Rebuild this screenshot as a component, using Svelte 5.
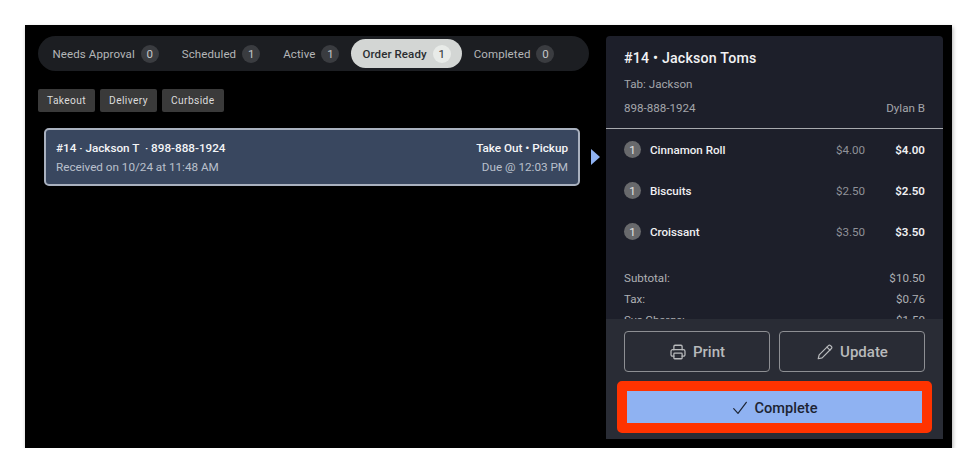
<script lang="ts">
  const tabs = [
    { label: 'Needs Approval', count: 0 },
    { label: 'Scheduled', count: 1 },
    { label: 'Active', count: 1 },
    { label: 'Order Ready', count: 1, active: true },
    { label: 'Completed', count: 0 },
  ];
  const filters = ['Takeout', 'Delivery', 'Curbside'];
  const items = [
    { name: 'Cinnamon Roll', price: '$4.00' },
    { name: 'Biscuits', price: '$2.50' },
    { name: 'Croissant', price: '$3.50' },
  ];
  const totals = [
    { label: 'Subtotal:', value: '$10.50' },
    { label: 'Tax:', value: '$0.76' },
    { label: 'Svc Charge:', value: '$1.50' },
  ];
</script>

<div class="frame">
  <div class="left">
    <div class="tabs">
      {#each tabs as tab}
        <div class="tab" class:active={tab.active}>
          <span>{tab.label}</span>
          <span class="count">{tab.count}</span>
        </div>
      {/each}
    </div>

    <div class="filters">
      {#each filters as f}
        <div class="filter">{f}</div>
      {/each}
    </div>

    <div class="order-row">
      <div class="order">
        <div class="line">
          <span class="strong">#14 · Jackson T &nbsp;· 898-888-1924</span>
          <span class="strong">Take Out • Pickup</span>
        </div>
        <div class="line muted">
          <span>Received on 10/24 at 11:48 AM</span>
          <span>Due @ 12:03 PM</span>
        </div>
      </div>
      <div class="pointer"></div>
    </div>
  </div>

  <div class="panel">
    <div class="scroll">
      <div class="head">
        <div class="title">#14 • Jackson Toms</div>
        <div class="tab-name">Tab: Jackson</div>
        <div class="contact">
          <span>898-888-1924</span>
          <span>Dylan B</span>
        </div>
      </div>
      <div class="items">
        {#each items as item}
          <div class="item">
            <span class="qty">1</span>
            <span class="name">{item.name}</span>
            <span class="price">{item.price}</span>
            <span class="total">{item.price}</span>
          </div>
        {/each}
      </div>
      <div class="totals">
        {#each totals as t}
          <div class="sum">
            <span>{t.label}</span>
            <span>{t.value}</span>
          </div>
        {/each}
      </div>
    </div>

    <div class="actions">
      <div class="btn-row">
        <button class="btn">
          <svg width="18" height="18" viewBox="0 0 24 24" fill="none" stroke="currentColor" stroke-width="1.7" stroke-linejoin="round" stroke-linecap="round">
            <path d="M6.5 9V4.5a1.5 1.5 0 0 1 1.5-1.5h8a1.5 1.5 0 0 1 1.5 1.5V9" />
            <path d="M6.5 17.5H4.5A1.8 1.8 0 0 1 2.7 15.7V11a2.2 2.2 0 0 1 2.2-2.2h14.2a2.2 2.2 0 0 1 2.2 2.2v4.7a1.8 1.8 0 0 1-1.8 1.8h-2" />
            <rect x="6.5" y="13.5" width="11" height="7.5" rx="1" />
          </svg>
          Print
        </button>
        <button class="btn">
          <svg width="18" height="18" viewBox="0 0 24 24" fill="none" stroke="currentColor" stroke-width="1.6" stroke-linejoin="round" stroke-linecap="round">
            <path d="M3 21l1.2-5.2L16.6 3.4a1.9 1.9 0 0 1 2.7 0l1.3 1.3a1.9 1.9 0 0 1 0 2.7L8.2 19.8z" />
            <path d="M14.6 5.4l4 4" />
          </svg>
          Update
        </button>
      </div>
      <div class="highlight">
        <button class="complete">
          <svg width="16" height="16" viewBox="0 0 24 24" fill="none" stroke="currentColor" stroke-width="1.8" stroke-linecap="round" stroke-linejoin="round">
            <path d="M2.5 13l6.5 7L21.5 3.5" />
          </svg>
          <span>Complete</span>
        </button>
      </div>
    </div>
  </div>
</div>

<style>
  :global(body) {
    background: #fff;
  }

  .frame {
    display: flex;
    box-sizing: border-box;
    width: 927px;
    height: 423px;
    margin: 25px 0 0 25px;
    padding: 11px 9px 9px 13px;
    background: #000;
    box-shadow: 1px 2px 4px rgba(0, 0, 0, 0.3);
    font-family: Roboto, sans-serif;
    color: #fff;
  }

  .left {
    width: 568px;
    flex: none;
  }

  .tabs {
    display: flex;
    align-items: center;
    box-sizing: border-box;
    width: 551px;
    height: 35px;
    padding: 0 3px;
    background: #1c1e22;
    border-radius: 18px;
  }

  .tab {
    display: flex;
    align-items: center;
    gap: 6px;
    height: 29px;
    padding: 0 11.5px;
    font-size: 11.5px;
    letter-spacing: 0.1px;
    color: #b4b6b8;
    white-space: nowrap;
    border-radius: 15px;
  }

  .tab.active {
    background: #d3d6d4;
    color: #2a2d30;
    font-weight: 500;
  }

  .count {
    display: flex;
    align-items: center;
    justify-content: center;
    width: 18px;
    height: 18px;
    border-radius: 50%;
    background: #3a3c40;
    color: #c4c6c8;
    font-size: 11.5px;
    font-weight: 400;
  }

  .tab.active .count {
    background: #e8ebe8;
    color: #2a2d30;
  }

  .filters {
    display: flex;
    gap: 5px;
    margin-top: 18px;
  }

  .filter {
    display: flex;
    align-items: center;
    height: 23px;
    padding: 0 9px;
    background: #3a3a3a;
    border-radius: 2px;
    font-size: 10.2px;
    letter-spacing: 0.4px;
    color: #dcdcdc;
  }

  .order-row {
    display: flex;
    align-items: center;
    gap: 11px;
    margin: 16px 0 0 6px;
  }

  .order {
    box-sizing: border-box;
    width: 536px;
    height: 58px;
    padding: 8px 10px 0 10px;
    background: #39475f;
    border: 2px solid #a9b1bf;
    border-radius: 5px;
  }

  .line {
    display: flex;
    justify-content: space-between;
    height: 19px;
    align-items: center;
    font-size: 11.7px;
  }

  .strong {
    font-weight: 500;
    color: #f4f5f7;
  }

  .muted {
    color: #b9c0cc;
  }

  .pointer {
    width: 0;
    height: 0;
    border-left: 9px solid #8fb2f2;
    border-top: 8.5px solid transparent;
    border-bottom: 8.5px solid transparent;
  }

  .panel {
    display: flex;
    flex-direction: column;
    width: 337px;
    flex: none;
    background: #1d1f2a;
    border-radius: 4px 4px 0 0;
    overflow: hidden;
  }

  .scroll {
    flex: 1;
    min-height: 0;
    overflow: hidden;
  }

  .head {
    height: 93px;
    box-sizing: border-box;
    padding: 12px 18px 0;
    border-bottom: 1.5px solid #a8aaae;
  }

  .title {
    font-size: 14.2px;
    font-weight: 500;
    line-height: 20px;
    letter-spacing: 0.2px;
    color: #f2f2f4;
  }

  .tab-name {
    margin-top: 6px;
    font-size: 11.6px;
    line-height: 20px;
    color: #a4a6aa;
  }

  .contact {
    display: flex;
    justify-content: space-between;
    margin-top: 4px;
    font-size: 11.6px;
    line-height: 20px;
    color: #a4a6aa;
  }

  .items {
    padding: 0 18px;
  }

  .item {
    display: flex;
    align-items: center;
    height: 41px;
    font-size: 11.6px;
  }

  .qty {
    display: flex;
    align-items: center;
    justify-content: center;
    width: 17px;
    height: 17px;
    margin-right: 9px;
    border-radius: 50%;
    background: #68696c;
    color: #e4e4e4;
    font-size: 11.5px;
  }

  .name {
    flex: 1;
    font-weight: 500;
    color: #f0f0f2;
  }

  .price {
    color: #8f9198;
  }

  .total {
    width: 60px;
    text-align: right;
    font-weight: 600;
    color: #f0f0f2;
  }

  .totals {
    margin-top: 15.5px;
    padding: 0 18px;
  }

  .sum {
    display: flex;
    justify-content: space-between;
    height: 21px;
    align-items: center;
    font-size: 11.6px;
    color: #aeb0b4;
  }

  .actions {
    flex: none;
    box-sizing: border-box;
    height: 120px;
    padding: 12px 18px 0;
    background: #292c35;
  }

  .btn-row {
    display: flex;
    gap: 9px;
  }

  button {
    font-family: inherit;
    cursor: pointer;
  }

  .btn {
    display: flex;
    align-items: center;
    justify-content: center;
    gap: 6px;
    flex: 1;
    height: 41px;
    padding: 0;
    background: transparent;
    border: 1.5px solid #8d8f93;
    border-radius: 4px;
    color: #b8babc;
    font-size: 15px;
    font-weight: 500;
  }

  .highlight {
    margin: 9px -7px 0;
    border: 10px solid #ff3300;
    border-radius: 5px;
  }

  .complete {
    display: flex;
    align-items: center;
    justify-content: center;
    gap: 7px;
    width: 100%;
    height: 32px;
    padding: 1px 0 0;
    background: #8fb2f2;
    border: none;
    color: #1d2433;
    font-size: 14.6px;
    font-weight: 500;
  }
</style>
